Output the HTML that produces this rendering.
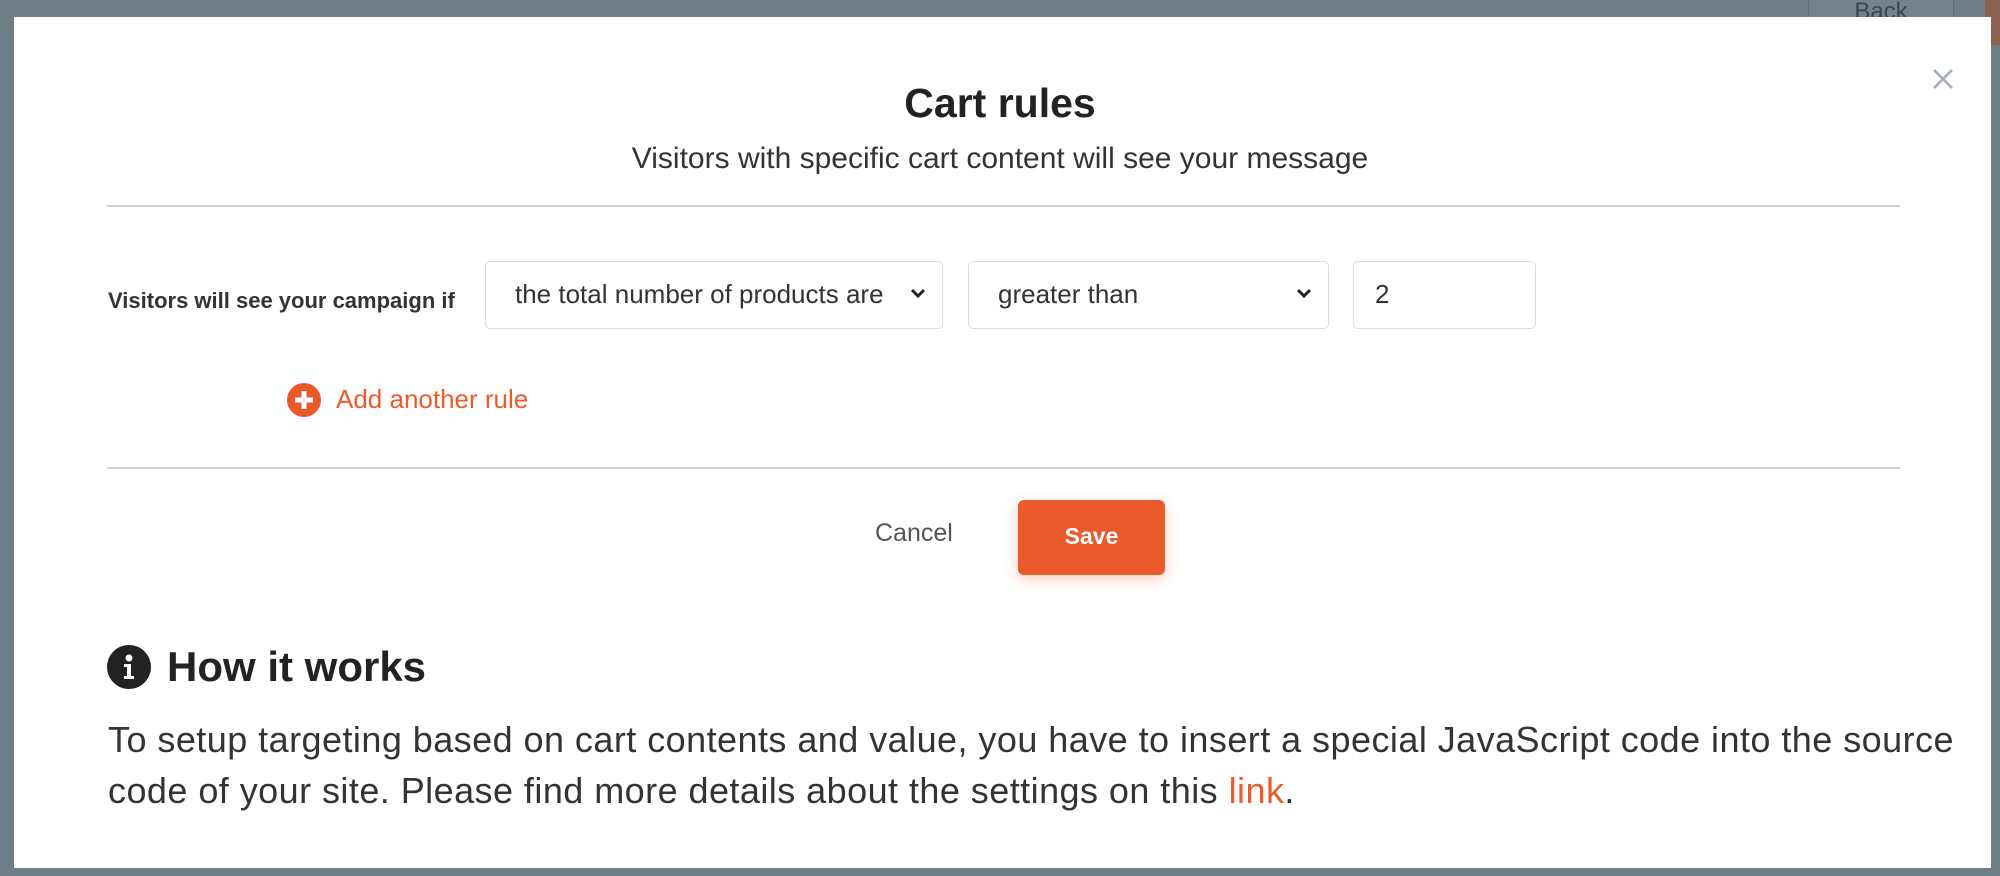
<!DOCTYPE html>
<html><head><meta charset="utf-8"><style>
*{box-sizing:border-box;margin:0;padding:0}
body{width:2000px;height:876px;background:#6e8087;font-family:"Liberation Sans",Arial,sans-serif;position:relative;overflow:hidden;color:#222}
.back{position:absolute;left:1808px;top:-10px;width:146px;height:28px;border:1px solid #5f7178;background:#72848b;color:#38474e;font-size:24px;text-align:center;line-height:42px}
.strip{position:absolute;left:1985px;top:0;width:15px;height:45px;background:#8a6153}
.modal{position:absolute;left:14px;top:17px;width:1977px;height:851px;background:#fff}
.abs{position:absolute}
h1{position:absolute;left:0;width:2000px;text-align:center;top:80px;font-size:41px;font-weight:bold;color:#222}
.sub{position:absolute;left:0;width:2000px;text-align:center;top:142px;font-size:30px;color:#333}
.hr{position:absolute;left:107px;width:1793px;height:2px;background:#cfcfcf}
.lbl{position:absolute;left:108px;top:288px;font-size:22px;font-weight:bold;color:#333}
.box{position:absolute;top:261px;height:68px;border:1.5px solid #d8dbe0;border-radius:5px;font-size:26px;color:#333;line-height:65px;padding-left:29px}
.chev{position:absolute;right:16px;top:26px}
.add{position:absolute;left:336px;top:384px;font-size:26px;color:#ee5a2a}
.cancel{position:absolute;left:875px;top:519px;font-size:25px;color:#555}
.save{position:absolute;left:1018px;top:500px;width:147px;height:75px;background:#ea5a2b;border-radius:6px;color:#fff;font-weight:bold;font-size:23px;text-align:center;line-height:72px;box-shadow:0 4px 14px rgba(234,90,43,.3)}
.how{position:absolute;left:167px;top:643px;font-size:42px;font-weight:bold;color:#222}
.p{position:absolute;left:108px;top:714px;width:1885px;font-size:36px;letter-spacing:0.45px;line-height:51px;color:#333}
.p a{color:#ee5a2a;text-decoration:none}
</style></head><body>
<div class="back">Back</div><div class="strip"></div>
<div class="modal"></div>
<svg class="abs" style="left:1932px;top:68px" width="22" height="22" viewBox="0 0 22 22"><path d="M2 2L20 20M20 2L2 20" stroke="#a4acba" stroke-width="2.6"/></svg>
<h1>Cart rules</h1>
<div class="sub">Visitors with specific cart content will see your message</div>
<div class="hr" style="top:205px"></div>
<div class="lbl">Visitors will see your campaign if</div>
<div class="box" style="left:485px;width:458px">the total number of products are<svg class="chev" width="16" height="12" viewBox="0 0 16 12"><path d="M2 2L8 8L14 2" stroke="#222" stroke-width="3" fill="none"/></svg></div>
<div class="box" style="left:968px;width:361px">greater than<svg class="chev" width="16" height="12" viewBox="0 0 16 12"><path d="M2 2L8 8L14 2" stroke="#222" stroke-width="3" fill="none"/></svg></div>
<div class="box" style="left:1353px;width:183px;padding-left:21px">2</div>
<svg class="abs" style="left:287px;top:383px" width="34" height="34" viewBox="0 0 34 34"><circle cx="17" cy="17" r="17" fill="#ea5a2b"/><path d="M17 8V26M8 17H26" stroke="#fff" stroke-width="5"/></svg>
<div class="add">Add another rule</div>
<div class="hr" style="top:467px"></div>
<div class="cancel">Cancel</div>
<div class="save">Save</div>
<svg class="abs" style="left:107px;top:645px" width="44" height="44" viewBox="0 0 44 44"><circle cx="22" cy="22" r="22" fill="#222"/><circle cx="22" cy="13" r="3.5" fill="#fff"/><path d="M17 19H24V31H27V34H17V31H20V22H17Z" fill="#fff"/></svg>
<div class="how">How it works</div>
<div class="p">To setup targeting based on cart contents and value, you have to insert a special JavaScript code into the source code of your site. Please find more details about the settings on this <a>link</a>.</div>
</body></html>
